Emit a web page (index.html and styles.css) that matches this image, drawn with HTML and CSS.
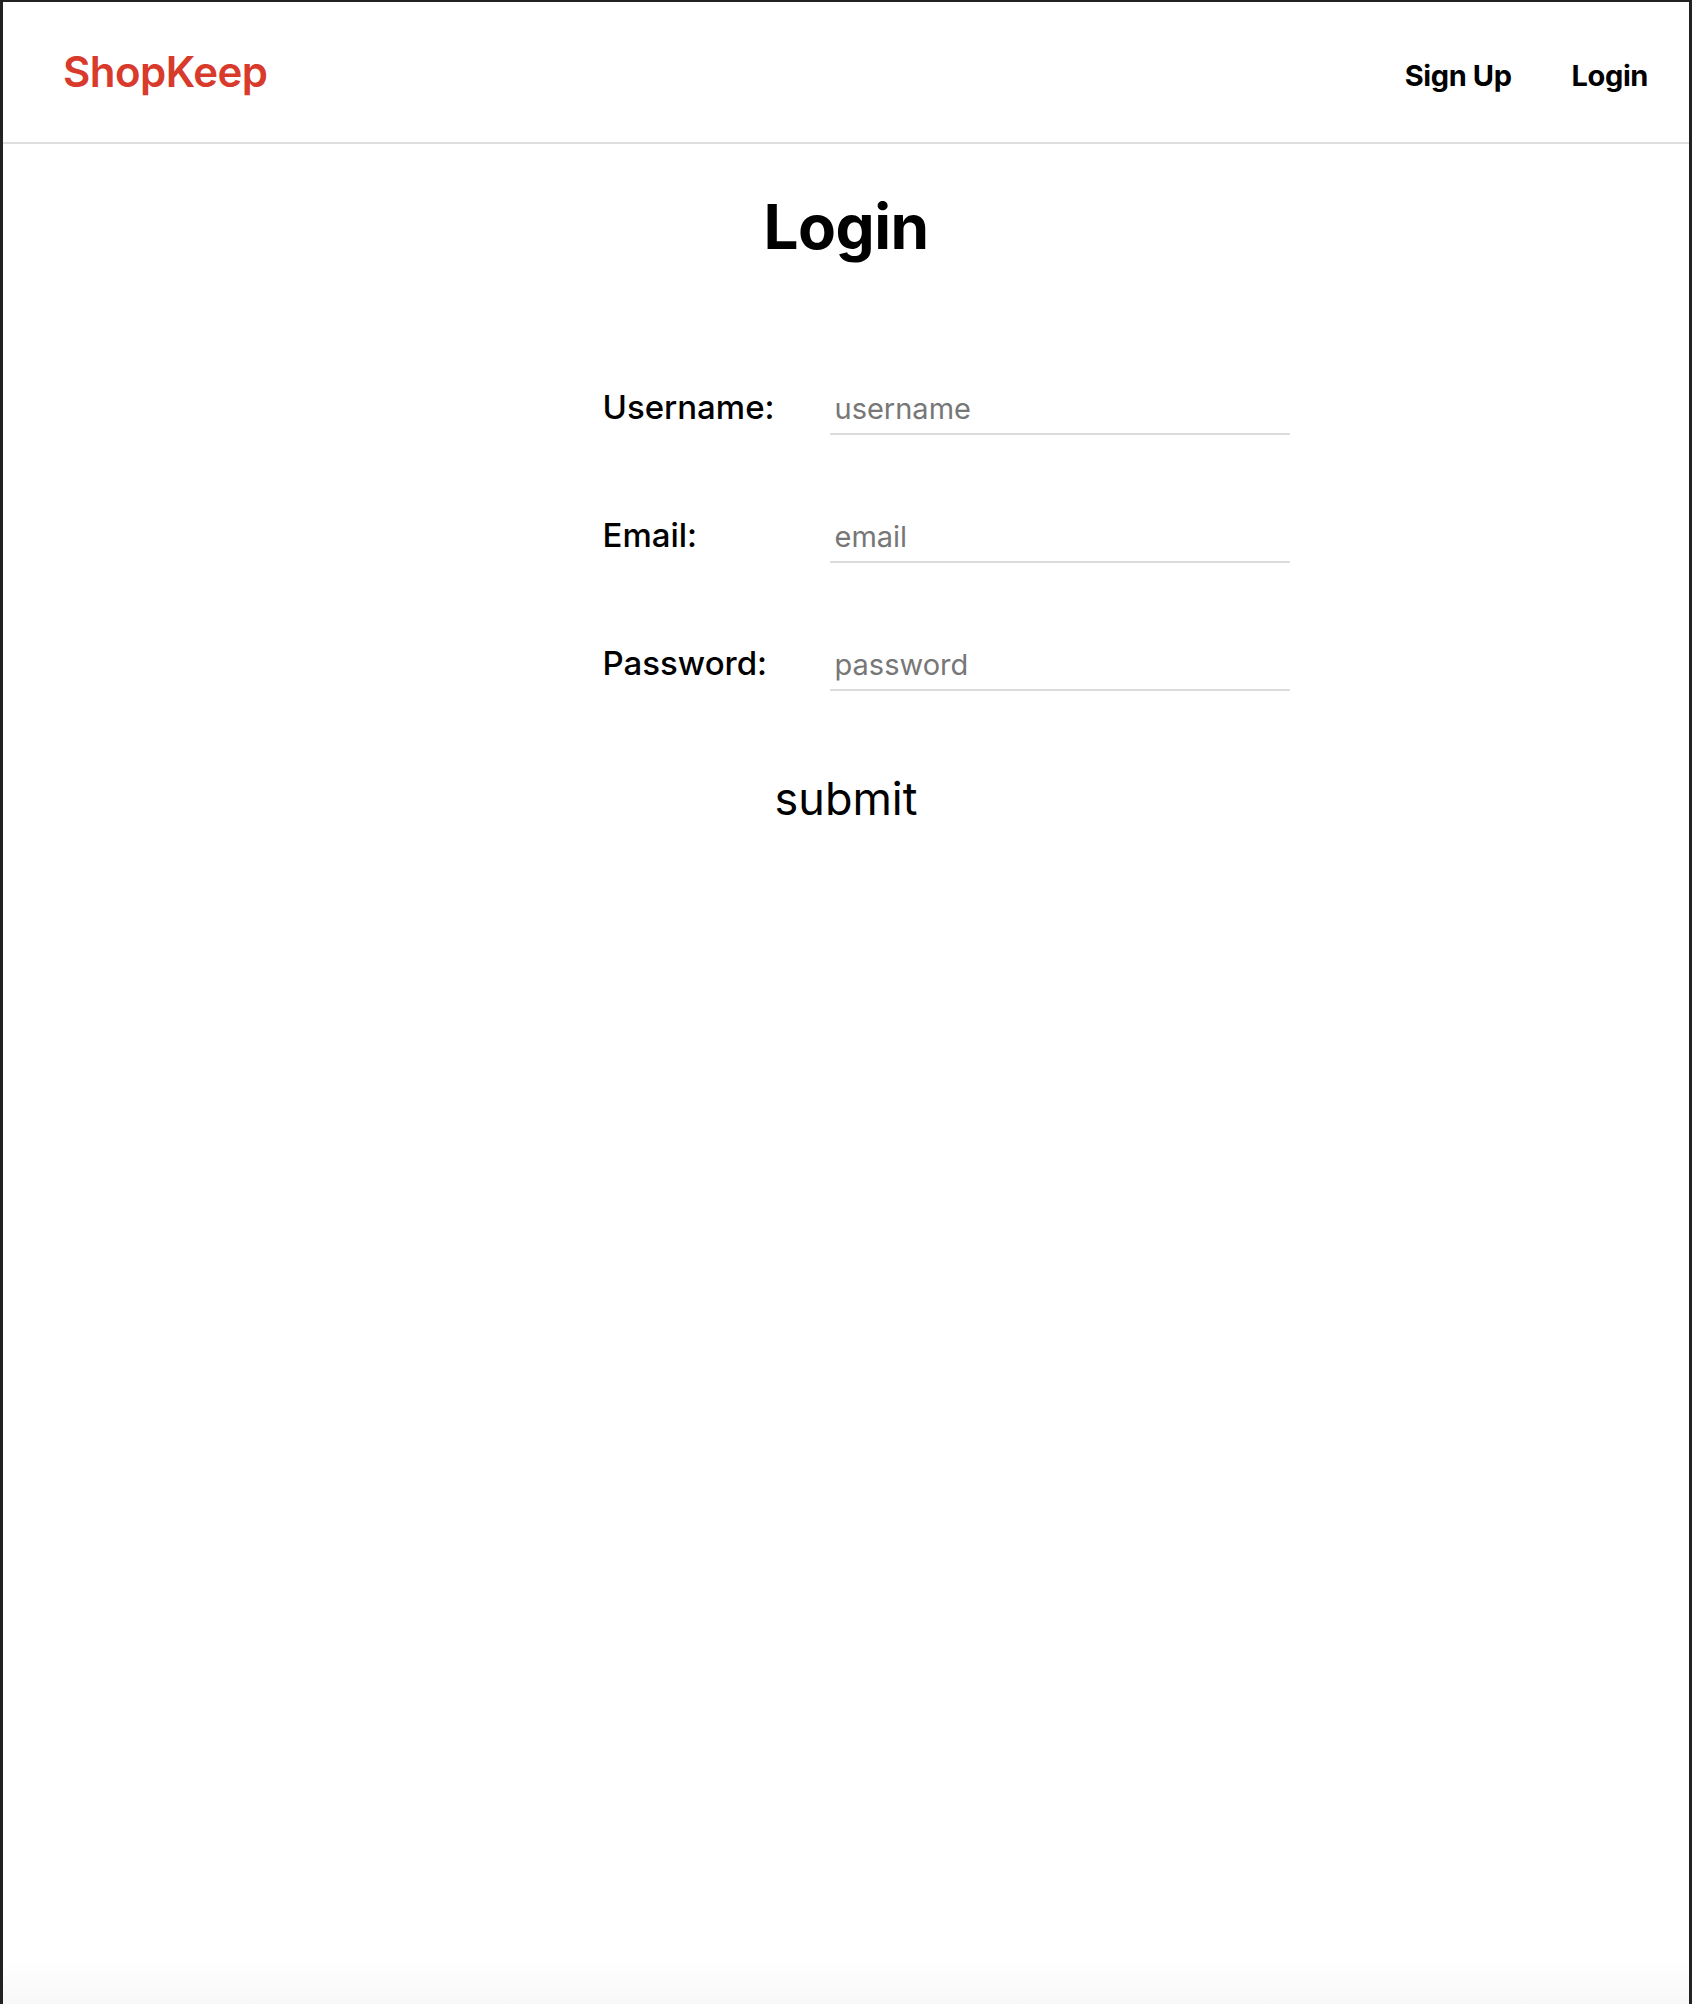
FILE: index.html
```html
<!DOCTYPE html>
<html lang="en">
<head>
<meta charset="utf-8">
<title>ShopKeep - Login</title>
<link rel="stylesheet" href="styles.css">
</head>
<body>
  <header class="site-header">
    <a class="logo" href="#">ShopKeep</a>
    <nav class="nav">
      <a class="nav-link" href="#">Sign Up</a>
      <a class="nav-link" href="#">Login</a>
    </nav>
  </header>
  <main class="page">
    <h1 class="page-title">Login</h1>
    <form class="login-form">
      <div class="form-row">
        <label class="form-label" for="username">Username:</label>
        <input class="form-input" id="username" type="text" placeholder="username">
      </div>
      <div class="form-row">
        <label class="form-label" for="email">Email:</label>
        <input class="form-input" id="email" type="email" placeholder="email">
      </div>
      <div class="form-row">
        <label class="form-label" for="password">Password:</label>
        <input class="form-input" id="password" type="password" placeholder="password">
      </div>
      <div class="form-actions">
        <button class="submit-btn" type="button">submit</button>
      </div>
    </form>
  </main>
</body>
</html>
```
FILE: styles.css
```css
* { box-sizing: border-box; }

html, body { height: 100%; }

body {
  margin: 0;
  min-height: 100vh;
  border-top: 2px solid #222;
  border-left: 3px solid #222;
  border-right: 3px solid #222;
  background: linear-gradient(to bottom, #fff 0, #fff calc(100% - 44px), #f8f8f8 100%);
  font-family: Inter, "Open Sans", sans-serif;
  color: #000;
}

.site-header {
  height: 142px;
  border-bottom: 2px solid #dedede;
  display: flex;
  align-items: center;
  justify-content: space-between;
  padding: 0 41px 0 60px;
}

.logo {
  color: #d83a2c;
  text-decoration: none;
  font-size: 42px;
  font-weight: 600;
  letter-spacing: -0.5px;
  position: relative;
  top: -1px;
}

.nav {
  display: flex;
  gap: 60px;
  padding-top: 6px;
}

.nav-link {
  color: #000;
  text-decoration: none;
  font-size: 29px;
  font-weight: 700;
  letter-spacing: -0.4px;
}

.page {
  display: flex;
  flex-direction: column;
  align-items: center;
}

.page-title {
  margin: 45px 0 0;
  font-size: 62px;
  font-weight: 700;
  line-height: 1.21;
  letter-spacing: -0.5px;
}

.login-form {
  width: 887px;
  padding-left: 200px;
  margin-top: 121px;
  display: flex;
  flex-direction: column;
  gap: 78px;
}

.form-row {
  display: flex;
  align-items: baseline;
}

.form-label {
  width: 227px;
  flex: none;
  font-size: 33px;
  font-weight: 500;
}

.form-input {
  width: 460px;
  border: none;
  border-bottom: 2px solid #dcdcdc;
  outline: none;
  background: transparent;
  font-family: Inter, "Open Sans", sans-serif;
  font-size: 29px;
  line-height: 36px;
  height: 50px;
  padding: 6px 5px 8px;
  color: #000;
}

.form-input::placeholder { color: #777; }

.form-actions {
  display: flex;
  justify-content: center;
  padding-right: 200px;
  margin-top: 2px;
}

.submit-btn {
  border: none;
  background: none;
  padding: 0;
  font-family: Inter, "Open Sans", sans-serif;
  font-size: 45px;
  font-weight: 400;
  color: #000;
  cursor: pointer;
}
```
